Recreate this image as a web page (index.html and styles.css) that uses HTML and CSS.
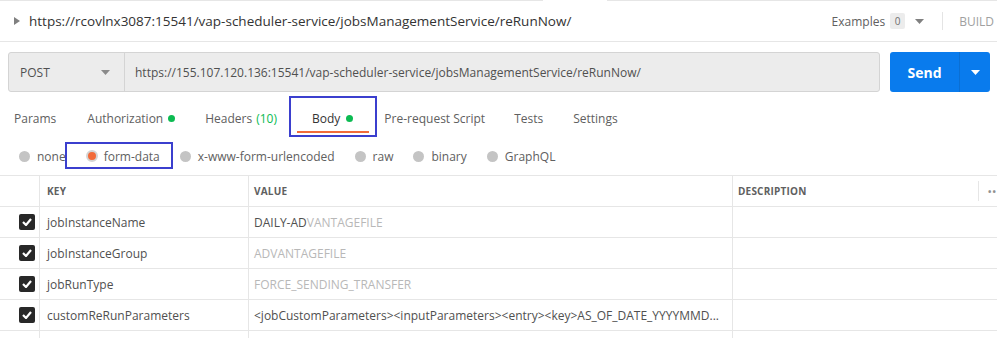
FILE: index.html
```html
<!DOCTYPE html>
<html>
<head>
<meta charset="utf-8">
<link rel="stylesheet" href="styles.css">
</head>
<body>
<div class="page">
  <div class="topline"><span class="tabgap"></span></div>
  <div class="titlebar">
    <div class="title">
      <svg class="tri" width="6" height="8" viewBox="0 0 6 8"><path d="M0 0 L6 4 L0 8 Z" fill="#808080"/></svg>
      <span>https://rcovlnx3087:15541/vap-scheduler-service/jobsManagementService/reRunNow/</span>
    </div>
    <div class="tools">
      <span class="examples">Examples</span>
      <span class="badge">0</span>
      <svg class="caret" width="9" height="5" viewBox="0 0 9 5"><path d="M0 0 H9 L4.5 5 Z" fill="#808080"/></svg>
      <span class="vsep"></span>
      <span class="build">BUILD</span>
    </div>
  </div>
  <div class="reqrow">
    <div class="urlgroup">
      <div class="method">
        <span>POST</span>
        <svg width="9" height="5" viewBox="0 0 9 5"><path d="M0 0 H9 L4.5 5 Z" fill="#8a8a8a"/></svg>
      </div>
      <div class="url">https://155.107.120.136:15541/vap-scheduler-service/jobsManagementService/reRunNow/</div>
    </div>
    <div class="send">
      <span class="sendlabel">Send</span>
      <span class="senddrop"><svg width="9" height="5" viewBox="0 0 9 5"><path d="M0 0 H9 L4.5 5 Z" fill="#ffffff"/></svg></span>
    </div>
  </div>
  <div class="tabs">
    <span class="tab">Params</span>
    <span class="tab">Authorization<i class="dot"></i></span>
    <span class="tab">Headers<em class="count">(10)</em></span>
    <span class="tab active">Body<i class="dot dot-body"></i><span class="hl hl-body"></span></span>
    <span class="tab">Pre-request Script</span>
    <span class="tab">Tests</span>
    <span class="tab">Settings</span>
  </div>
  <div class="radios">
    <span class="radio"><i class="rb"></i>none</span>
    <span class="radio sel"><i class="rb"></i>form-data<span class="hl hl-form"></span></span>
    <span class="radio"><i class="rb"></i>x-www-form-urlencoded</span>
    <span class="radio"><i class="rb"></i>raw</span>
    <span class="radio"><i class="rb"></i>binary</span>
    <span class="radio"><i class="rb"></i>GraphQL</span>
  </div>
  <div class="table">
    <div class="row head">
      <div class="c chk"></div>
      <div class="c key">KEY</div>
      <div class="c val">VALUE</div>
      <div class="c desc">DESCRIPTION</div>
      <div class="c more"><span class="dots">••</span></div>
    </div>
    <div class="row">
      <div class="c chk"><span class="cb"><svg width="10" height="8" viewBox="0 0 10 8"><path d="M1 4 L4 7 L9 1" stroke="#fff" stroke-width="2.2" fill="none"/></svg></span></div>
      <div class="c key">jobInstanceName</div>
      <div class="c val">DAILY-AD<span class="blur">VANTAGEFILE</span></div>
      <div class="c desc"></div>
      <div class="c more"></div>
    </div>
    <div class="row">
      <div class="c chk"><span class="cb"><svg width="10" height="8" viewBox="0 0 10 8"><path d="M1 4 L4 7 L9 1" stroke="#fff" stroke-width="2.2" fill="none"/></svg></span></div>
      <div class="c key">jobInstanceGroup</div>
      <div class="c val"><span class="blur">ADVANTAGEFILE</span></div>
      <div class="c desc"></div>
      <div class="c more"></div>
    </div>
    <div class="row">
      <div class="c chk"><span class="cb"><svg width="10" height="8" viewBox="0 0 10 8"><path d="M1 4 L4 7 L9 1" stroke="#fff" stroke-width="2.2" fill="none"/></svg></span></div>
      <div class="c key">jobRunType</div>
      <div class="c val"><span class="blur">FORCE_SENDING_TRANSFER</span></div>
      <div class="c desc"></div>
      <div class="c more"></div>
    </div>
    <div class="row">
      <div class="c chk"><span class="cb"><svg width="10" height="8" viewBox="0 0 10 8"><path d="M1 4 L4 7 L9 1" stroke="#fff" stroke-width="2.2" fill="none"/></svg></span></div>
      <div class="c key">customReRunParameters</div>
      <div class="c val">&lt;jobCustomParameters&gt;&lt;inputParameters&gt;&lt;entry&gt;&lt;key&gt;AS_OF_DATE_YYYYMMD...</div>
      <div class="c desc"></div>
      <div class="c more"></div>
    </div>
    <div class="row last">
      <div class="c chk"></div>
      <div class="c key"></div>
      <div class="c val"></div>
      <div class="c desc"></div>
      <div class="c more"></div>
    </div>
  </div>
</div>
</body>
</html>
```
FILE: styles.css
```css
html, body {
  margin: 0;
  padding: 0;
  background: #fff;
  overflow: hidden;
}
body {
  font-family: "Open Sans", "Noto Sans", sans-serif;
  color: #505050;
  width: 997px;
  height: 338px;
}
.page {
  width: 997px;
  height: 338px;
  overflow: hidden;
}
.topline {
  height: 0;
  border-top: 1px solid #e6e6e6;
  position: relative;
}
.tabgap {
  position: absolute;
  left: 543px;
  top: -1px;
  width: 64px;
  height: 1px;
  background: #fff;
}
.titlebar {
  height: 40px;
  border-bottom: 1px solid #e6e6e6;
  display: flex;
  align-items: center;
  justify-content: space-between;
  padding: 0 0 0 14px;
}
.title {
  display: flex;
  align-items: center;
  gap: 9px;
  font-size: 13.5px;
  color: #333;
}
.tools {
  display: flex;
  align-items: center;
  font-size: 12px;
  color: #707070;
  padding-right: 3px;
}
.examples {
  color: #606060;
}
.badge {
  background: #ececec;
  color: #707070;
  font-size: 10px;
  width: 15px;
  height: 16px;
  display: inline-flex;
  align-items: center;
  justify-content: center;
  margin-left: 5px;
  border-radius: 2px;
}
.caret {
  margin-left: 10px;
}
.vsep {
  width: 1px;
  height: 18px;
  background: #e4e4e4;
  margin-left: 18px;
}
.build {
  margin-left: 16px;
  color: #a0a0a0;
  white-space: nowrap;
}
.reqrow {
  display: flex;
  align-items: stretch;
  padding: 10px 7px 0 8px;
  height: 40px;
  gap: 10px;
}
.urlgroup {
  display: flex;
  width: 872px;
  border: 1px solid #d4d4d4;
  border-radius: 3px;
  background: #ececec;
  box-sizing: border-box;
}
.method {
  width: 116px;
  border-right: 1px solid #d4d4d4;
  display: flex;
  align-items: center;
  justify-content: space-between;
  padding: 0 14px 0 11px;
  box-sizing: border-box;
  font-size: 12px;
  color: #505050;
}
.url {
  display: flex;
  align-items: center;
  padding-left: 10px;
  font-size: 12px;
  color: #505050;
  white-space: nowrap;
}
.send {
  width: 100px;
  background: #097bed;
  border-radius: 3px;
  display: flex;
  color: #fff;
}
.sendlabel {
  width: 69px;
  display: flex;
  align-items: center;
  justify-content: center;
  font-weight: 700;
  font-size: 14px;
  border-right: 1px solid #0a6fd4;
}
.senddrop {
  flex: 1;
  display: flex;
  align-items: center;
  justify-content: center;
}
.tabs {
  display: flex;
  align-items: center;
  height: 36px;
  margin-top: 8px;
  padding-left: 14px;
  font-size: 12px;
  color: #606060;
}
.tab {
  position: relative;
  display: inline-flex;
  align-items: center;
  white-space: nowrap;
}
.tab:nth-child(1) { margin-right: 31px; }
.tab:nth-child(2) { margin-right: 30px; }
.tab:nth-child(3) { margin-right: 35px; }
.tab:nth-child(4) { margin-right: 31px; }
.tab:nth-child(5) { margin-right: 29px; }
.tab:nth-child(6) { margin-right: 30px; }
.tab.active {
  color: #333;
}
.dot {
  display: inline-block;
  width: 7px;
  height: 7px;
  border-radius: 50%;
  background: #0cbb52;
  margin-left: 5px;
}
.dot-body {
  margin-left: 6px;
}
.count {
  font-style: normal;
  color: #0cbb52;
  margin-left: 4px;
}
.hl {
  position: absolute;
  border: 2px solid #3b3fce;
  box-sizing: border-box;
  pointer-events: none;
}
.hl-body {
  left: -23px;
  top: -14px;
  width: 88px;
  height: 41px;
}
.hl-body::after {
  content: "";
  position: absolute;
  left: 6px;
  right: 6px;
  bottom: 2px;
  height: 2px;
  background: #f26b3a;
}
.radios {
  display: flex;
  align-items: center;
  height: 22px;
  margin-top: 9px;
  padding-left: 19px;
  font-size: 12px;
  color: #606060;
}
.radio {
  position: relative;
  display: inline-flex;
  align-items: center;
  margin-right: 20px;
  white-space: nowrap;
}
.rb {
  display: inline-block;
  width: 11px;
  height: 11px;
  border-radius: 50%;
  background: #c4c4c4;
  margin-right: 7px;
  box-sizing: border-box;
}
.radio.sel .rb {
  background: #f26b3a;
  border: 2px solid #d4d4d4;
  width: 12px;
  height: 12px;
  margin-right: 6px;
}
.hl-form {
  left: -21px;
  top: -6px;
  width: 108px;
  height: 27px;
}
.table {
  margin-top: 8px;
  border-top: 1px solid #e6e6e6;
  font-size: 12px;
}
.row {
  display: flex;
  height: 31px;
  border-bottom: 1px solid #e6e6e6;
  box-sizing: border-box;
}
.row.last {
  border-bottom: none;
}
.c {
  display: flex;
  align-items: center;
  box-sizing: border-box;
  white-space: nowrap;
  overflow: hidden;
}
.chk {
  width: 40px;
  border-right: 1px solid #e6e6e6;
  justify-content: flex-start;
  padding-left: 19px;
}
.key {
  width: 209px;
  border-right: 1px solid #e6e6e6;
  padding-left: 7px;
  color: #505050;
}
.val {
  width: 484px;
  border-right: 1px solid #e6e6e6;
  padding-left: 5px;
  color: #505050;
}
.desc {
  width: 246px;
  padding-left: 5px;
}
.more {
  flex: 1;
  padding-left: 9px;
}
.head .c {
  font-size: 10px;
  font-weight: 700;
  color: #606060;
  letter-spacing: 0.2px;
}
.head .desc {
  border-right: 1px solid #e6e6e6;
  height: 20px;
  align-self: center;
}
.dots {
  color: #909090;
  font-size: 9px;
  letter-spacing: 1px;
}
.cb {
  width: 16px;
  height: 16px;
  border-radius: 2px;
  background: #282828;
  display: inline-flex;
  align-items: center;
  justify-content: center;
}
.blur {
  color: #b8b8b8;
}
```
